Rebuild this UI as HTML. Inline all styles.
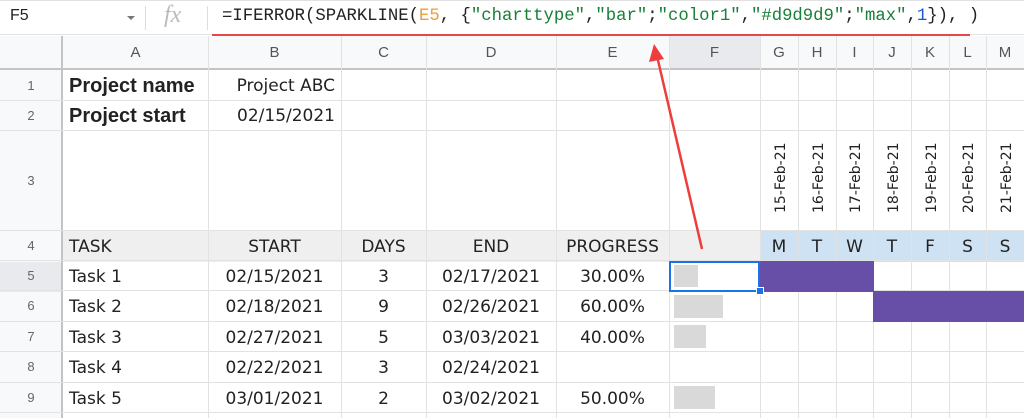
<!DOCTYPE html>
<html><head><meta charset="utf-8"><style>
*{margin:0;padding:0;box-sizing:border-box}
body{width:1024px;height:418px;overflow:hidden;background:#fff;font-family:"Liberation Sans",sans-serif;position:relative;color:#222}
.a{position:absolute}
.vl{position:absolute;width:1px;background:#e2e2e2}
.hl{position:absolute;height:1px;background:#e2e2e2}
.ch{position:absolute;top:36px;height:34px;line-height:34px;text-align:center;font-size:15px;color:#555}
.rh{position:absolute;left:0;width:62px;text-align:center;font-size:13px;color:#666}
.t{position:absolute;font-family:"DejaVu Sans",sans-serif;font-size:17px;color:#222;white-space:nowrap}
.b{font-family:"Liberation Sans",sans-serif;font-size:20px;font-weight:bold}
.mono{font-family:"Liberation Mono",monospace}
</style></head><body>
<div class="a" style="left:0;top:0;width:1024px;height:35px;background:#fff;border-bottom:1px solid #e2e2e2"></div>
<div class="a" style="left:0;top:0;width:1024px;height:1px;background:#e2e2e2"></div>
<div class="a" style="left:10px;top:7px;font-size:16px">F5</div>
<div class="a" style="left:127px;top:16px;width:0;height:0;border-left:4px solid transparent;border-right:4px solid transparent;border-top:4px solid #777"></div>
<div class="a" style="left:145px;top:6px;width:1px;height:24px;background:#ddd"></div>
<div class="a" style="left:164px;top:2px;font-family:'Liberation Serif',serif;font-style:italic;font-size:24px;color:#bbb">fx</div>
<div class="a" style="left:207px;top:6px;width:1px;height:24px;background:#ddd"></div>
<div class="a mono" style="left:222px;top:7px;font-size:17.3px;color:#222;white-space:nowrap">=IFERROR(SPARKLINE(<span style="color:#f29b38">E5</span>, {<span style="color:#188038">"charttype"</span>,<span style="color:#188038">"bar"</span>;<span style="color:#188038">"color1"</span>,<span style="color:#188038">"#d9d9d9"</span>;<span style="color:#188038">"max"</span>,<span style="color:#1a55d6">1</span>}), )</div>
<div class="a" style="left:212px;top:34px;width:758px;height:2px;background:#e8474a"></div>
<div class="a" style="left:0;top:36px;width:1024px;height:34px;background:#f8f9fa"></div>
<div class="a" style="left:669px;top:36px;width:91px;height:34px;background:#e8eaed"></div>
<div class="a" style="left:0;top:70px;width:62px;height:348px;background:#f8f9fa"></div>
<div class="a" style="left:0;top:262px;width:62px;height:30px;background:#e8eaed"></div>
<div class="a" style="left:0;top:68px;width:1024px;height:2px;background:#c4c4c4"></div>
<div class="a" style="left:61px;top:36px;width:2px;height:382px;background:#c4c4c4"></div>
<div class="a" style="left:63px;top:231px;width:697px;height:31px;background:#efefef"></div>
<div class="a" style="left:760px;top:231px;width:264px;height:31px;background:#cfe2f3"></div>
<div class="vl" style="left:208px;top:36px;height:382px"></div>
<div class="vl" style="left:341px;top:36px;height:382px"></div>
<div class="vl" style="left:426px;top:36px;height:382px"></div>
<div class="vl" style="left:556px;top:36px;height:382px"></div>
<div class="vl" style="left:669px;top:36px;height:382px"></div>
<div class="vl" style="left:760px;top:36px;height:382px"></div>
<div class="vl" style="left:798px;top:36px;height:382px"></div>
<div class="vl" style="left:836px;top:36px;height:382px"></div>
<div class="vl" style="left:873px;top:36px;height:382px"></div>
<div class="vl" style="left:911px;top:36px;height:382px"></div>
<div class="vl" style="left:949px;top:36px;height:382px"></div>
<div class="vl" style="left:986px;top:36px;height:382px"></div>
<div class="hl" style="left:0;top:100px;width:1024px"></div>
<div class="hl" style="left:0;top:130px;width:1024px"></div>
<div class="hl" style="left:0;top:230px;width:1024px"></div>
<div class="hl" style="left:0;top:260px;width:1024px"></div>
<div class="hl" style="left:0;top:290px;width:1024px"></div>
<div class="hl" style="left:0;top:321px;width:1024px"></div>
<div class="hl" style="left:0;top:351px;width:1024px"></div>
<div class="hl" style="left:0;top:382px;width:1024px"></div>
<div class="hl" style="left:0;top:412px;width:1024px"></div>
<div class="a" style="left:760px;top:261px;width:114px;height:31px;background:#674ea7"></div>
<div class="a" style="left:873px;top:291px;width:151px;height:31px;background:#674ea7"></div>
<div class="ch" style="left:63px;width:145px">A</div>
<div class="ch" style="left:208px;width:133px">B</div>
<div class="ch" style="left:341px;width:85px">C</div>
<div class="ch" style="left:426px;width:130px">D</div>
<div class="ch" style="left:556px;width:113px">E</div>
<div class="ch" style="left:669px;width:91px">F</div>
<div class="ch" style="left:760px;width:38px">G</div>
<div class="ch" style="left:798px;width:38px">H</div>
<div class="ch" style="left:836px;width:37px">I</div>
<div class="ch" style="left:873px;width:38px">J</div>
<div class="ch" style="left:911px;width:38px">K</div>
<div class="ch" style="left:949px;width:37px">L</div>
<div class="ch" style="left:986px;width:38px">M</div>
<div class="rh" style="top:78px">1</div>
<div class="rh" style="top:108px">2</div>
<div class="rh" style="top:173px">3</div>
<div class="rh" style="top:238px">4</div>
<div class="rh" style="top:268px">5</div>
<div class="rh" style="top:298px">6</div>
<div class="rh" style="top:329px">7</div>
<div class="rh" style="top:359px">8</div>
<div class="rh" style="top:390px">9</div>
<div class="t b" style="left:69px;top:75px">Project name</div>
<div class="t b" style="left:69px;top:105px">Project start</div>
<div class="t" style="left:208px;width:127px;text-align:right;top:76px">Project ABC</div>
<div class="t" style="left:208px;width:127px;text-align:right;top:106px">02/15/2021</div>
<div class="t" style="left:69px;top:237px">TASK</div>
<div class="t" style="left:208px;width:133px;text-align:center;top:237px">START</div>
<div class="t" style="left:341px;width:85px;text-align:center;top:237px">DAYS</div>
<div class="t" style="left:426px;width:130px;text-align:center;top:237px">END</div>
<div class="t" style="left:556px;width:113px;text-align:center;top:237px">PROGRESS</div>
<div class="t" style="left:760px;width:38px;text-align:center;top:237px">M</div>
<div class="t" style="left:798px;width:38px;text-align:center;top:237px">T</div>
<div class="t" style="left:836px;width:37px;text-align:center;top:237px">W</div>
<div class="t" style="left:873px;width:38px;text-align:center;top:237px">T</div>
<div class="t" style="left:911px;width:38px;text-align:center;top:237px">F</div>
<div class="t" style="left:949px;width:37px;text-align:center;top:237px">S</div>
<div class="t" style="left:986px;width:38px;text-align:center;top:237px">S</div>
<div class="t" style="left:69px;top:267px">Task 1</div>
<div class="t" style="left:208px;width:133px;text-align:center;top:267px">02/15/2021</div>
<div class="t" style="left:341px;width:85px;text-align:center;top:267px">3</div>
<div class="t" style="left:426px;width:130px;text-align:center;top:267px">02/17/2021</div>
<div class="t" style="left:556px;width:113px;text-align:center;top:267px">30.00%</div>
<div class="t" style="left:69px;top:297px">Task 2</div>
<div class="t" style="left:208px;width:133px;text-align:center;top:297px">02/18/2021</div>
<div class="t" style="left:341px;width:85px;text-align:center;top:297px">9</div>
<div class="t" style="left:426px;width:130px;text-align:center;top:297px">02/26/2021</div>
<div class="t" style="left:556px;width:113px;text-align:center;top:297px">60.00%</div>
<div class="t" style="left:69px;top:328px">Task 3</div>
<div class="t" style="left:208px;width:133px;text-align:center;top:328px">02/27/2021</div>
<div class="t" style="left:341px;width:85px;text-align:center;top:328px">5</div>
<div class="t" style="left:426px;width:130px;text-align:center;top:328px">03/03/2021</div>
<div class="t" style="left:556px;width:113px;text-align:center;top:328px">40.00%</div>
<div class="t" style="left:69px;top:358px">Task 4</div>
<div class="t" style="left:208px;width:133px;text-align:center;top:358px">02/22/2021</div>
<div class="t" style="left:341px;width:85px;text-align:center;top:358px">3</div>
<div class="t" style="left:426px;width:130px;text-align:center;top:358px">02/24/2021</div>
<div class="t" style="left:69px;top:389px">Task 5</div>
<div class="t" style="left:208px;width:133px;text-align:center;top:389px">03/01/2021</div>
<div class="t" style="left:341px;width:85px;text-align:center;top:389px">2</div>
<div class="t" style="left:426px;width:130px;text-align:center;top:389px">03/02/2021</div>
<div class="t" style="left:556px;width:113px;text-align:center;top:389px">50.00%</div>
<div class="a" style="left:674px;top:265px;width:24px;height:22px;background:#d9d9d9"></div>
<div class="a" style="left:674px;top:295px;width:49px;height:23px;background:#d9d9d9"></div>
<div class="a" style="left:674px;top:325px;width:32px;height:23px;background:#d9d9d9"></div>
<div class="a" style="left:674px;top:386px;width:41px;height:23px;background:#d9d9d9"></div>
<div class="a" style="left:669px;top:261px;width:91px;height:31px;border:2px solid #1a73e8"></div>
<div class="a" style="left:756px;top:287px;width:8px;height:8px;background:#1a73e8;border:1px solid #fff"></div>
<svg class="a" style="left:0;top:0" width="1024" height="418">
<g font-family="DejaVu Sans,sans-serif" font-size="14" fill="#222">
<text transform="translate(785,213) rotate(-90)">15-Feb-21</text>
<text transform="translate(823,213) rotate(-90)">16-Feb-21</text>
<text transform="translate(860,213) rotate(-90)">17-Feb-21</text>
<text transform="translate(898,213) rotate(-90)">18-Feb-21</text>
<text transform="translate(936,213) rotate(-90)">19-Feb-21</text>
<text transform="translate(973,213) rotate(-90)">20-Feb-21</text>
<text transform="translate(1011,213) rotate(-90)">21-Feb-21</text>
</g>
<line x1="702" y1="249" x2="657" y2="56" stroke="#ee3d3d" stroke-width="2.5"/>
<polygon points="654,44 649,62 664,59" fill="#ee3d3d"/>
</svg>
</body></html>
